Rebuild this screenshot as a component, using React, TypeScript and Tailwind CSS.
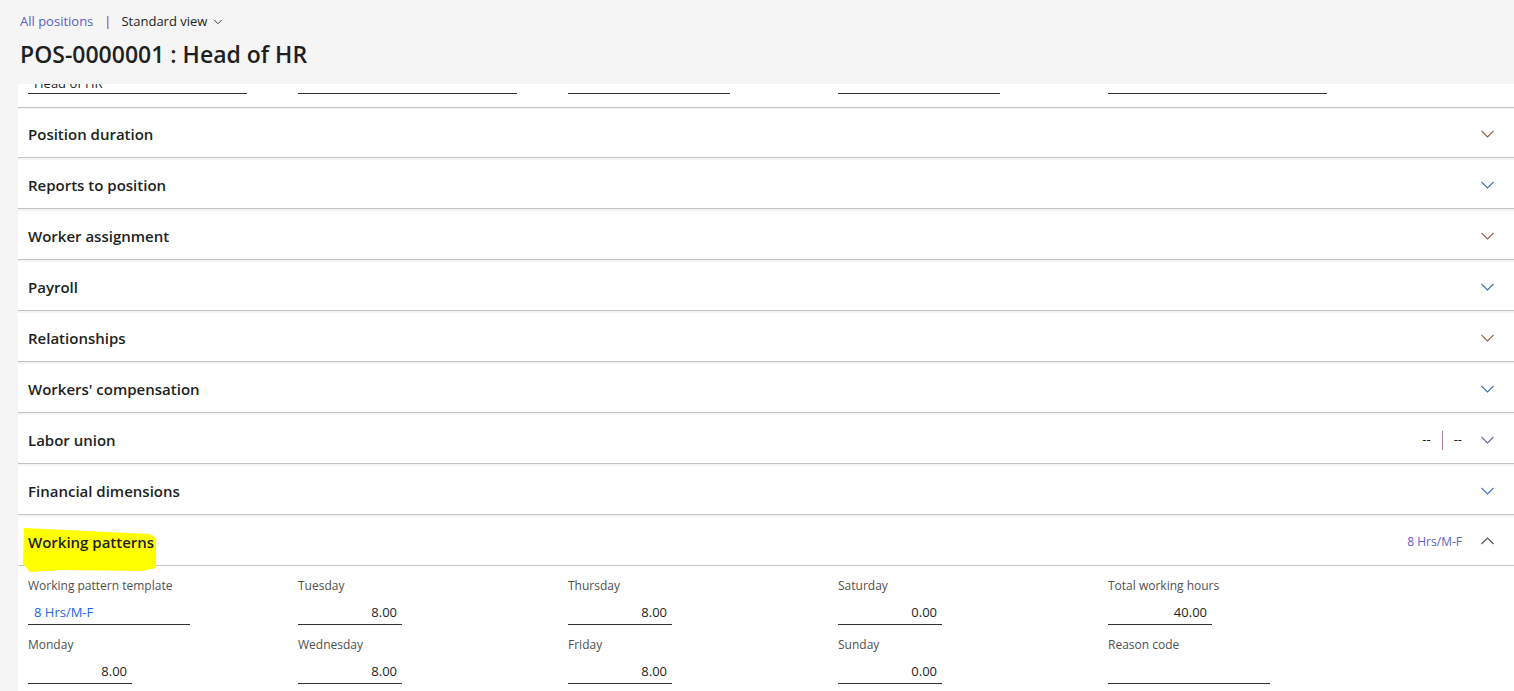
import { ChevronDown } from 'lucide-react'

const font = { fontFamily: '"Segoe UI", "Open Sans", "Noto Sans", sans-serif' }

const sections = [
  { title: 'Position duration', tone: 'text-[#9a6048]' },
  { title: 'Reports to position', tone: 'text-[#3f6fb8]' },
  { title: 'Worker assignment', tone: 'text-[#9a6048]' },
  { title: 'Payroll', tone: 'text-[#3f6fb8]' },
  { title: 'Relationships', tone: 'text-[#9a6048]' },
  { title: "Workers' compensation", tone: 'text-[#3f6fb8]' },
  { title: 'Labor union', tone: 'text-[#5a6f99]', extra: true },
  { title: 'Financial dimensions', tone: 'text-[#3f6fb8]' },
]

type Field = { label: string; value: string; width: string; link?: boolean; align?: 'left' | 'right' }

const rowOne: Field[] = [
  { label: 'Working pattern template', value: '8 Hrs/M-F', width: 'w-[162px]', link: true, align: 'left' },
  { label: 'Tuesday', value: '8.00', width: 'w-[104px]' },
  { label: 'Thursday', value: '8.00', width: 'w-[104px]' },
  { label: 'Saturday', value: '0.00', width: 'w-[104px]' },
  { label: 'Total working hours', value: '40.00', width: 'w-[104px]' },
]

const rowTwo: Field[] = [
  { label: 'Monday', value: '8.00', width: 'w-[104px]' },
  { label: 'Wednesday', value: '8.00', width: 'w-[104px]' },
  { label: 'Friday', value: '8.00', width: 'w-[104px]' },
  { label: 'Sunday', value: '0.00', width: 'w-[104px]' },
  { label: 'Reason code', value: '', width: 'w-[162px]', align: 'left' },
]

// Thin fluent-style chevron, 13x7
const Chevron = ({ up, className }: { up?: boolean; className?: string }) => (
  <svg width="13" height="8" viewBox="0 0 13 8" className={className} fill="none">
    <polyline
      points={up ? '0.5,7 6.5,1 12.5,7' : '0.5,1 6.5,7 12.5,1'}
      stroke="currentColor"
      strokeWidth="1.1"
    />
  </svg>
)

const FormField = ({ field }: { field: Field }) => (
  <div className="w-[270px] shrink-0">
    <div className="h-4 text-[12px] leading-4 text-[#505050]">{field.label}</div>
    <div
      className={`mt-2 h-[23px] border-b border-[#323130] ${field.width} px-[6px] pr-[5px] pt-[1px] text-[13px] leading-[18px] ${
        field.align === 'left' ? 'text-left' : 'text-right'
      } ${field.link ? 'text-[#2266e3]' : 'text-[#201f1e]'}`}
    >
      {field.value}
    </div>
  </div>
)

export default function App() {
  return (
    <div className="h-[691px] w-[1514px] overflow-hidden bg-[#f5f5f5] text-[#201f1e]" style={font}>
      {/* Page header */}
      <header className="h-[84px] pl-5">
        <div className="flex h-[42px] items-center pt-px text-[13px]">
          <span className="text-[#5b5fc7]">All positions</span>
          <span className="ml-[11px] mr-[10px] text-[#a4262c]">|</span>
          <span className="flex items-center gap-1 text-[#201f1e]">
            Standard view <ChevronDown size={14} strokeWidth={1.5} />
          </span>
        </div>
        <h1 className="-mt-[1px] text-[23px] font-semibold leading-[26px]">POS-0000001 : Head of HR</h1>
      </header>

      <main className="pl-[18px]">
        {/* Partially scrolled general tab */}
        <div className="mb-px h-[24px] overflow-hidden border-b border-[#c4c4c4] bg-white pl-[10px]">
          <div className="flex">
            {['w-[219px]', 'w-[219px]', 'w-[162px]', 'w-[162px]', 'w-[219px]'].map((w, i) => (
              <div key={i} className="w-[270px] shrink-0">
                <div className={`-mt-[8px] h-[18px] border-b border-[#323130] ${w} px-[6px] text-[13px] leading-[14px]`}>
                  {i === 0 ? 'Head of HR' : ''}
                </div>
              </div>
            ))}
          </div>
        </div>

        {sections.map((s) => (
          <div
            key={s.title}
            className="mb-[2px] flex h-[49px] items-center border-b border-[#c4c4c4] bg-white pl-[10px] pr-[20px]"
          >
            <span className="flex-1 pt-[2px] text-[15px] font-semibold">{s.title}</span>
            {s.extra && (
              <div className="mr-[19px] flex items-center pt-[2px] text-[13px]">
                <span>--</span>
                <span className="mx-[11px] h-[19px] w-px bg-[#b08090]" />
                <span>--</span>
              </div>
            )}
            <Chevron className={`${s.tone} mt-[2px]`} />
          </div>
        ))}

        {/* Working patterns (expanded) */}
        <div className="bg-white pb-6">
          <div className="relative flex h-[49px] items-center border-b border-[#c4c4c4] pl-[10px] pr-[20px]">
            <svg className="absolute left-[4px] top-[11px]" width="136" height="44" viewBox="0 0 136 44">
              <path d="M2 0 L128 6 L134 10 L134 40 L120 43 L40 42 L8 44 L1 36 Z" fill="#ffff00" />
            </svg>
            <span className="relative flex-1 pt-[2px] text-[15px] font-semibold">Working patterns</span>
            <span className="mr-[19px] pt-[2px] text-[12px] text-[#5b5fc7]">8 Hrs/M-F</span>
            <Chevron up className="text-[#505050]" />
          </div>

          <div className="pl-[10px] pt-[12px]">
            <div className="flex">
              {rowOne.map((f) => (
                <FormField key={f.label} field={f} />
              ))}
            </div>
            <div className="mt-3 flex">
              {rowTwo.map((f) => (
                <FormField key={f.label} field={f} />
              ))}
            </div>
          </div>
        </div>
      </main>
    </div>
  )
}
